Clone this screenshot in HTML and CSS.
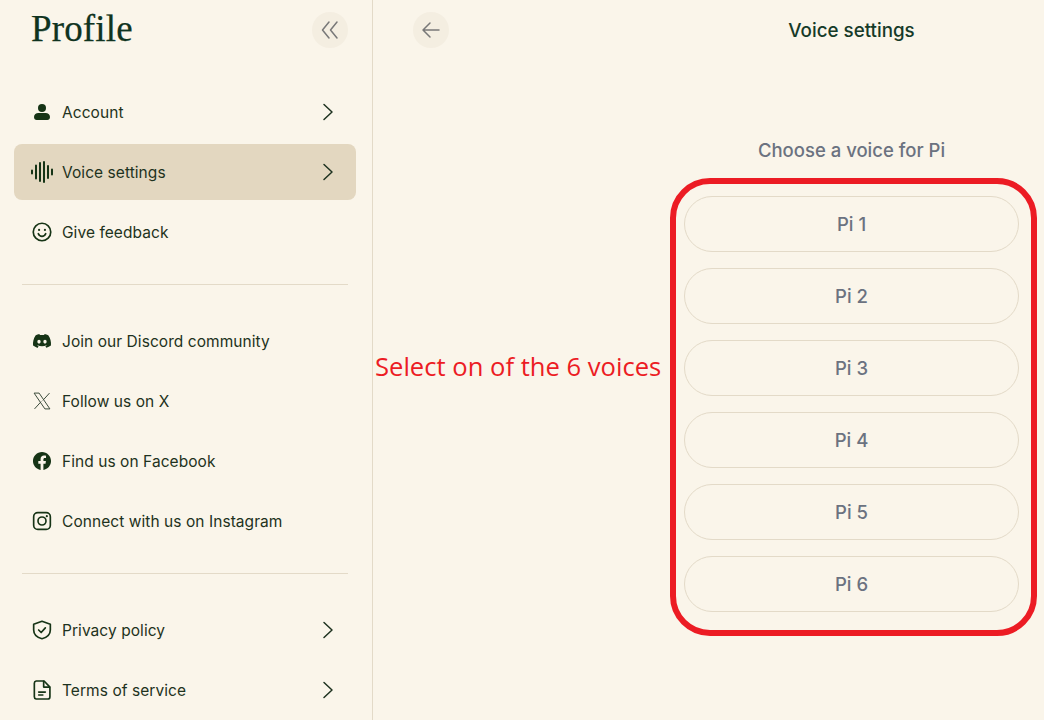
FILE: index.html
```html
<!DOCTYPE html>
<html lang="en">
<head>
<meta charset="utf-8">
<title>Voice settings</title>
<link rel="stylesheet" href="styles.css">
</head>
<body>
<div class="app">
  <aside class="sidebar">
    <header class="side-head">
      <h1 class="title">Profile</h1>
      <button class="round" aria-label="Collapse">
        <svg width="24" height="24" viewBox="0 0 24 24" class="gray"><path d="M11 4 4.500 12 11 20M19 4l-6.500 8 6.500 8"/></svg>
      </button>
    </header>
    <nav class="group first">
      <a class="row"><svg class="ic" viewBox="0 0 24 24"><circle cx="12" cy="7.200" r="4.800" class="f"/><path class="f" d="M2.400 18c0-3 2.600-4.800 5.100-4.800h9c2.500 0 5.100 1.800 5.100 4.800 0 2.300-1.300 3.600-3.200 3.600H5.600c-1.900 0-3.200-1.300-3.200-3.600z"/></svg><span class="label">Account</span><svg class="chev" viewBox="0 0 12 18"><path d="M2 1.500 10 9l-8 7.500"/></svg></a>
      <a class="row active"><svg class="ic wide" viewBox="0 0 24 24"><path class="bars" d="M2 10.500v3M6 5.500v13M10 3v18M14 2v20M18 6v12M22 9.500v5"/></svg><span class="label">Voice settings</span><svg class="chev" viewBox="0 0 12 18"><path d="M2 1.500 10 9l-8 7.500"/></svg></a>
      <a class="row"><svg class="ic" viewBox="0 0 24 24"><g class="s"><circle cx="12" cy="12" r="10.500"/><path d="M7.500 14c1 2.200 2.600 3.200 4.500 3.200s3.500-1 4.500-3.200"/></g><circle cx="8.500" cy="9.500" r="1.300" class="f"/><circle cx="15.500" cy="9.500" r="1.300" class="f"/></svg><span class="label">Give feedback</span></a>
    </nav>
    <hr class="rule">
    <nav class="group">
      <a class="row"><svg class="ic" viewBox="-1.300 -1.300 26.600 26.600"><path class="f" d="M20.317 4.37a19.791 19.791 0 0 0-4.885-1.515.074.074 0 0 0-.079.037c-.21.375-.444.864-.608 1.25a18.27 18.27 0 0 0-5.487 0 12.64 12.64 0 0 0-.617-1.25.077.077 0 0 0-.079-.037A19.736 19.736 0 0 0 3.677 4.37a.07.07 0 0 0-.032.027C.533 9.046-.32 13.58.099 18.057a.082.082 0 0 0 .031.057 19.9 19.9 0 0 0 5.993 3.03.078.078 0 0 0 .084-.028 14.09 14.09 0 0 0 1.226-1.994.076.076 0 0 0-.041-.106 13.107 13.107 0 0 1-1.872-.892.077.077 0 0 1-.008-.128 10.2 10.2 0 0 0 .372-.292.074.074 0 0 1 .077-.01c3.928 1.793 8.18 1.793 12.062 0a.074.074 0 0 1 .078.01c.12.098.246.198.373.292a.077.077 0 0 1-.006.127 12.299 12.299 0 0 1-1.873.892.077.077 0 0 0-.041.107c.36.698.772 1.362 1.225 1.993a.076.076 0 0 0 .084.028 19.839 19.839 0 0 0 6.002-3.03.077.077 0 0 0 .032-.054c.5-5.177-.838-9.674-3.549-13.66a.061.061 0 0 0-.031-.03zM8.02 15.33c-1.183 0-2.157-1.085-2.157-2.419 0-1.333.956-2.419 2.157-2.419 1.21 0 2.176 1.096 2.157 2.42 0 1.333-.956 2.418-2.157 2.418zm7.975 0c-1.183 0-2.157-1.085-2.157-2.419 0-1.333.955-2.419 2.157-2.419 1.21 0 2.176 1.096 2.157 2.42 0 1.333-.946 2.418-2.157 2.418z"/></svg><span class="label">Join our Discord community</span></a>
      <a class="row"><svg class="ic" viewBox="0 0 24 24"><path class="thin" d="M2.500 2.500h6l13 19h-6zM21 2.500l-8 8.800M3 21.500l8-8.800"/></svg><span class="label">Follow us on X</span></a>
      <a class="row"><svg class="ic" viewBox="-1.300 -1.300 26.600 26.600"><path class="f" d="M24 12.073c0-6.627-5.373-12-12-12s-12 5.373-12 12c0 5.990 4.388 10.954 10.125 11.854v-8.385H7.078v-3.470h3.047V9.430c0-3.007 1.792-4.669 4.533-4.669 1.312 0 2.686.235 2.686.235v2.953H15.830c-1.491 0-1.956.925-1.956 1.874v2.250h3.328l-.532 3.470h-2.796v8.385C19.612 23.027 24 18.062 24 12.073z"/></svg><span class="label">Find us on Facebook</span></a>
      <a class="row"><svg class="ic" viewBox="0 0 24 24"><g class="s"><rect x="2" y="2" width="20" height="20" rx="5"/><circle cx="12" cy="12" r="4.800"/></g><circle cx="17.800" cy="6.200" r="1.300" class="f"/></svg><span class="label">Connect with us on Instagram</span></a>
    </nav>
    <hr class="rule">
    <nav class="group">
      <a class="row"><svg class="ic" viewBox="0 0 24 24"><g class="s"><path d="M12 1.500 22 5v7c0 5.500-4.500 9-10 10.500C6.500 21 2 17.500 2 12V5z"/><path d="m8 12 3 3 5-5.500"/></g></svg><span class="label">Privacy policy</span><svg class="chev" viewBox="0 0 12 18"><path d="M2 1.500 10 9l-8 7.500"/></svg></a>
      <a class="row"><svg class="ic" viewBox="0 0 24 24"><g class="s"><path d="M5 1.200h9.500L21.500 8.500V20a2.800 2.800 0 0 1-2.800 2.800H5A2.800 2.800 0 0 1 2.800 20V4A2.800 2.800 0 0 1 5 1.200z"/><path d="M14 1.500V8.500h7M8 14.500h8M8 18h5"/></g></svg><span class="label">Terms of service</span><svg class="chev" viewBox="0 0 12 18"><path d="M2 1.500 10 9l-8 7.500"/></svg></a>
    </nav>
  </aside>
  <main class="main">
    <header class="main-head">
      <button class="round" aria-label="Back">
        <svg width="24" height="24" viewBox="0 0 24 24" class="gray"><path d="M20 12H4.500M11 5l-7 7 7 7"/></svg>
      </button>
      <h2 class="page-title">Voice settings</h2>
    </header>
    <section class="voices">
      <p class="prompt">Choose a voice for Pi</p>
      <button class="voice">Pi 1</button>
      <button class="voice">Pi 2</button>
      <button class="voice">Pi 3</button>
      <button class="voice">Pi 4</button>
      <button class="voice">Pi 5</button>
      <button class="voice">Pi 6</button>
    </section>
  </main>
  <div class="note-box"></div>
  <div class="note-text">Select on of the 6 voices</div>
</div>
</body>
</html>
```
FILE: styles.css
```css
* { box-sizing: border-box; }
html, body { margin: 0; height: 720px; overflow: hidden; }
body { background: #faf5ea; color: #1e3220; font-family: Inter, "Liberation Sans", sans-serif; }
.app { display: flex; height: 720px; position: relative; overflow: hidden; }

.sidebar { width: 373px; flex: none; border-right: 1px solid #e3dac8; padding: 0 16px 0 14px; }
.side-head { height: 60px; display: flex; align-items: center; justify-content: space-between; padding: 0 8px 0 17px; }
.title { margin: -3px 0 0; font: 400 37px/60px "Liberation Serif", serif; letter-spacing: .15px; color: #0f3320; -webkit-text-stroke: .25px #0f3320; }
.round { width: 36px; height: 36px; border: 0; border-radius: 50%; background: #f4eee1; padding: 0; display: flex; align-items: center; justify-content: center; }
.gray { fill: none; stroke: #787878; stroke-width: 1.500; stroke-linecap: round; stroke-linejoin: round; }

.group { display: flex; flex-direction: column; gap: 4px; }
.group.first { margin-top: 24px; }
.row { height: 56px; display: flex; align-items: center; padding: 0 22px 0 18px; border-radius: 8px; font-size: 15.500px; letter-spacing: .06px; color: #1e3220; }
.row.active { background: #e3d7c0; }
.label { flex: 1; margin-left: 10px; }
.ic { width: 20px; height: 20px; flex: none; overflow: visible; }
.ic.wide { width: 24px; height: 24px; margin: 0 -2px; }
.f { fill: #163416; }
.s { fill: none; stroke: #163416; stroke-width: 2; stroke-linecap: round; stroke-linejoin: round; }
.thin { fill: none; stroke: #3c4c3c; stroke-width: 1.200; }
.bars { fill: none; stroke: #163416; stroke-width: 2; stroke-linecap: round; }
.chev { width: 12px; height: 18px; flex: none; fill: none; stroke: #1e3220; stroke-width: 1.500; stroke-linecap: round; stroke-linejoin: round; }
.rule { border: 0; border-top: 1px solid #e3dac8; margin: 24px 8px 28px; }

.main { flex: 1; padding: 12px 25px 0 40px; }
.main-head { display: flex; align-items: center; height: 36px; }
.page-title { margin: 0 0 0 auto; width: 335px; text-align: center; font-size: 18.800px; font-weight: 500; color: #163a28; }
.voices { width: 335px; margin: 0 0 0 auto; display: flex; flex-direction: column; gap: 16px; }
.prompt { margin: 90px 0 18px; height: 24px; line-height: 24px; text-align: center; font-size: 18.500px; font-weight: 500; color: #6b7280; }
.voice { height: 56px; flex: none; border: 1px solid #e3dac8; border-radius: 28px; background: transparent; font: 500 18.500px Inter, "Liberation Sans", sans-serif; color: #6b7280; }

.note-box { position: absolute; left: 670px; top: 178px; width: 367px; height: 458px; border: 6px solid #ec1c24; border-radius: 40px; }
.note-text { position: absolute; left: 375px; top: 349px; font: 400 25.600px/36px "Open Sans", sans-serif; color: #ec1c24; white-space: nowrap; }
```
